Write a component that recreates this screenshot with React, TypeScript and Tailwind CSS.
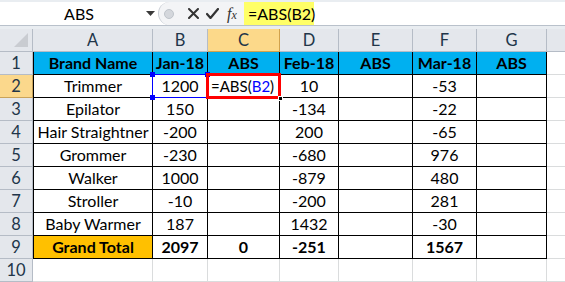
import React from 'react'

const cols = ['A', 'B', 'C', 'D', 'E', 'F', 'G']

type Row = { name: string; b: string; c: string; d: string; e: string; f: string; g: string }

const rows: Row[] = [
  { name: 'Trimmer', b: '1200', c: '', d: '10', e: '', f: '-53', g: '' },
  { name: 'Epilator', b: '150', c: '', d: '-134', e: '', f: '-22', g: '' },
  { name: 'Hair Straightner', b: '-200', c: '', d: '200', e: '', f: '-65', g: '' },
  { name: 'Grommer', b: '-230', c: '', d: '-680', e: '', f: '976', g: '' },
  { name: 'Walker', b: '1000', c: '', d: '-879', e: '', f: '480', g: '' },
  { name: 'Stroller', b: '-10', c: '', d: '-200', e: '', f: '281', g: '' },
  { name: 'Baby Warmer', b: '187', c: '', d: '1432', e: '', f: '-30', g: '' },
]

const grid = 'grid grid-cols-[33px_120px_55px_72px_59px_74px_64px_70px_1fr]'

function RowHead({ n, active }: { n: number; active?: boolean }) {
  return (
    <div
      className={
        active
          ? 'h-[23px] flex items-center justify-center border-r border-b border-[#c9a35a] bg-[#fbd88c] text-[#213549] text-[16.5px]'
          : 'h-[23px] flex items-center justify-center border-r border-b border-[#b5bcc6] bg-[#e4e7ec] text-[#213549] text-[16.5px]'
      }
    >
      {n}
    </div>
  )
}

function Cell({ children, className = '' }: { children?: React.ReactNode; className?: string }) {
  return (
    <div className={'h-[23px] flex items-center justify-center border-r border-b border-black ' + className}>
      {children}
    </div>
  )
}

function FormulaBar() {
  return (
    <div className="h-[29px] bg-[#e9edf1] pt-[2px]">
      <div className="flex h-[24px] bg-white border-b border-[#b9c1cb]">
        <div className="w-[158px] flex items-center relative">
          <span className="w-[164px] text-center text-[16px] text-black">ABS</span>
          <svg className="absolute left-[146px] top-[9px]" width="9" height="5" viewBox="0 0 9 5">
            <path d="M0 0h9L4.5 5z" fill="#3a3a3a" />
          </svg>
        </div>
        <div className="w-[86px] flex items-center bg-[#f3f4f6] border-l border-[#c8cdd4] rounded-l-[12px]">
          <div className="w-[10px] h-[10px] rounded-full bg-[#d4d7dc] ml-[5px] border border-[#bfc4ca]" />
          <svg className="ml-[14px]" width="11" height="11" viewBox="0 0 11 11">
            <path d="M1 1l9 9M10 1l-9 9" stroke="#333" strokeWidth="2" strokeLinecap="round" />
          </svg>
          <svg className="ml-[7px]" width="13" height="11" viewBox="0 0 13 11">
            <path d="M1 6l3.5 4L12 1" stroke="#333" strokeWidth="2.2" fill="none" strokeLinecap="round" strokeLinejoin="round" />
          </svg>
          <span className="ml-[8px] text-[16px] italic font-['Liberation_Serif',serif] text-[#333] leading-none">
            f<span className="text-[12px]">x</span>
          </span>
        </div>
        <div className="flex-1 flex">
          <div className="bg-[#ffff66] w-[70px] flex items-center pl-[4px] text-[16px] text-black">=ABS(B2)</div>
        </div>
      </div>
    </div>
  )
}

export default function App() {
  return (
    <div className="w-[565px] h-[282px] overflow-hidden bg-white font-['Lato','Liberation_Sans',sans-serif] text-[16px] text-black">
      <FormulaBar />
      <div className={grid}>
        <div className="h-[23px] bg-[#e4e7ec] border-r border-b border-[#b5bcc6] relative">
          <svg className="absolute right-[4px] bottom-[4px]" width="14" height="14" viewBox="0 0 14 14">
            <path d="M14 0v14H0z" fill="#c9ccd1" />
          </svg>
        </div>
        {cols.map(c => (
          <div
            key={c}
            className={
              c === 'C'
                ? 'h-[23px] flex items-center justify-center border-r border-b border-[#d2a24c] bg-[#fcd98a] text-[#213549] text-[16.5px]'
                : 'h-[23px] flex items-center justify-center border-r border-b border-[#b5bcc6] bg-[#e4e7ec] text-[#213549] text-[16.5px]'
            }
          >
            {c}
          </div>
        ))}
        <div className="h-[23px] bg-[#e4e7ec] border-b border-[#b5bcc6]" />

        <RowHead n={1} />
        <Cell className="bg-[#00b0f0] font-bold border-l">Brand Name</Cell>
        <Cell className="bg-[#00b0f0] font-bold">Jan-18</Cell>
        <Cell className="bg-[#00b0f0] font-bold">ABS</Cell>
        <Cell className="bg-[#00b0f0] font-bold">Feb-18</Cell>
        <Cell className="bg-[#00b0f0] font-bold">ABS</Cell>
        <Cell className="bg-[#00b0f0] font-bold">Mar-18</Cell>
        <Cell className="bg-[#00b0f0] font-bold">ABS</Cell>
        <div className="h-[23px] border-b border-[#dadcdd]" />

        {rows.map((r, i) => (
          <React.Fragment key={r.name}>
            <RowHead n={i + 2} active={i === 0} />
            <Cell className="border-l">{r.name}</Cell>
            {i === 0 ? (
              <Cell className="relative">
                <div className="absolute inset-[-1px] border border-[#0000ff] pointer-events-none">
                  <div className="absolute left-[-3px] top-[-3px] w-[5px] h-[5px] bg-[#0000ff]" />
                  <div className="absolute right-[-3px] top-[-3px] w-[5px] h-[5px] bg-[#0000ff]" />
                  <div className="absolute left-[-3px] bottom-[-3px] w-[5px] h-[5px] bg-[#0000ff]" />
                </div>
                {r.b}
              </Cell>
            ) : (
              <Cell>{r.b}</Cell>
            )}
            {i === 0 ? (
              <Cell className="relative justify-start pl-[3px] text-[15px] whitespace-nowrap">
                <div className="absolute left-[-2px] top-[-2px] right-[-2px] bottom-[-2px] border-[3px] border-[#ff0000] pointer-events-none" />
                <div className="absolute right-[-4px] bottom-[-4px] w-[5px] h-[5px] bg-black border border-white" />
                <span>
                  =ABS(<span className="text-[#0000ff]">B2</span>)
                </span>
              </Cell>
            ) : (
              <Cell>{r.c}</Cell>
            )}
            <Cell>{r.d}</Cell>
            <Cell>{r.e}</Cell>
            <Cell>{r.f}</Cell>
            <Cell>{r.g}</Cell>
            <div className="h-[23px] border-b border-[#dadcdd]" />
          </React.Fragment>
        ))}

        <RowHead n={9} />
        <Cell className="bg-[#ffc000] font-bold border-l">Grand Total</Cell>
        <Cell className="font-bold">2097</Cell>
        <Cell className="font-bold">0</Cell>
        <Cell className="font-bold">-251</Cell>
        <Cell className="font-bold" />
        <Cell className="font-bold">1567</Cell>
        <Cell className="font-bold" />
        <div className="h-[23px] border-b border-[#dadcdd]" />

        <RowHead n={10} />
        {cols.map(c => (
          <div key={c} className="h-[23px] border-r border-b border-[#dadcdd]" />
        ))}
        <div className="h-[23px] border-b border-[#dadcdd]" />
      </div>
    </div>
  )
}
